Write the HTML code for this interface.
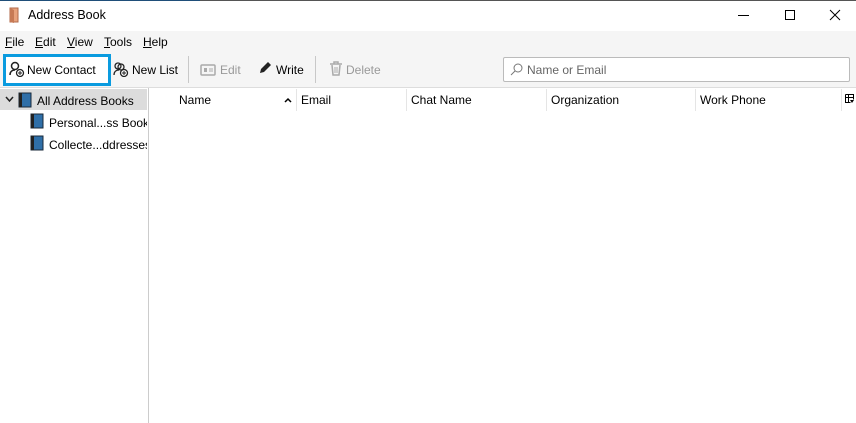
<!DOCTYPE html>
<html><head><style>
*{margin:0;padding:0;box-sizing:border-box}
body{width:856px;height:423px;overflow:hidden;background:#fff;font-family:"Liberation Sans",sans-serif;font-size:12px;color:#000;position:relative}
.a{position:absolute;white-space:nowrap}
u{text-decoration:underline}
.sep{position:absolute;width:1px;background:#c8c8c8}
.col{position:absolute;top:89px;height:22px;line-height:22px;border-right:1px solid #e5e5e5}
</style></head><body>
<div class="a" style="left:0;top:0;width:200px;height:1px;background:#1f4e79"></div>
<div class="a" style="left:200px;top:0;width:656px;height:1px;background:#555"></div>
<svg class="a" style="left:8px;top:7px" width="12" height="16"><path d="M2 1h8v14H2z" fill="#e8a27c" stroke="#b06a4a"/><path d="M2 1l4 2v13l-4-1z" fill="#c77a55"/></svg>
<div class="a" style="left:28px;top:8px;font-size:12.5px">Address Book</div>
<div class="a" style="left:738px;top:15px;width:11px;height:1px;background:#000"></div>
<div class="a" style="left:785px;top:10px;width:10px;height:10px;border:1px solid #000"></div>
<svg class="a" style="left:829px;top:9px" width="12" height="12"><path d="M1 1L11 11M11 1L1 11" stroke="#000"/></svg>
<div class="a" style="left:0;top:31px;width:856px;height:56px;background:#f5f5f5"></div>
<div class="a" style="left:5px;top:35px"><u>F</u>ile</div>
<div class="a" style="left:35px;top:35px"><u>E</u>dit</div>
<div class="a" style="left:67px;top:35px"><u>V</u>iew</div>
<div class="a" style="left:104px;top:35px"><u>T</u>ools</div>
<div class="a" style="left:143px;top:35px"><u>H</u>elp</div>
<div class="a" style="left:3px;top:54px;width:108px;height:32px;border:3px solid #0a9bdf;background:#fff"></div>
<svg class="a" style="left:9px;top:61px" width="16" height="16"><circle cx="6" cy="5" r="3.5" fill="none" stroke="#222" stroke-width="1.5"/><path d="M1 14c0-4 3-5 5-5" fill="none" stroke="#222" stroke-width="1.5"/><circle cx="11" cy="12" r="3.5" fill="#fff" stroke="#222" stroke-width="1.3"/><path d="M11 10v4M9 12h4" stroke="#222"/></svg>
<div class="a" style="left:27px;top:63px">New Contact</div>
<svg class="a" style="left:113px;top:61px" width="16" height="16"><circle cx="5" cy="5" r="3" fill="none" stroke="#222" stroke-width="1.3"/><circle cx="8" cy="6" r="3" fill="none" stroke="#222" stroke-width="1.3"/><path d="M1 14c0-4 3-5 5-5" fill="none" stroke="#222" stroke-width="1.3"/><circle cx="11" cy="12" r="3.5" fill="#fff" stroke="#222" stroke-width="1.3"/><path d="M11 10v4M9 12h4" stroke="#222"/></svg>
<div class="a" style="left:132px;top:63px">New List</div>
<div class="sep" style="left:188px;top:56px;height:27px"></div>
<svg class="a" style="left:200px;top:62px" width="16" height="14"><rect x="1" y="3" width="14" height="10" rx="1" fill="none" stroke="#aaa" stroke-width="1.5"/><rect x="4" y="6" width="3" height="4" fill="#aaa"/><path d="M9 7h4M9 9h4" stroke="#aaa"/></svg>
<div class="a" style="left:220px;top:63px;color:#999">Edit</div>
<svg class="a" style="left:258px;top:61px" width="14" height="14"><path d="M2 12l1-4 7-7 3 3-7 7z" fill="#222"/></svg>
<div class="a" style="left:276px;top:63px">Write</div>
<div class="sep" style="left:315px;top:56px;height:27px"></div>
<svg class="a" style="left:329px;top:61px" width="14" height="16"><path d="M1 3h12M5 3V1h4v2M3 4l1 10h6l1-10" fill="none" stroke="#aaa" stroke-width="1.5"/><path d="M6 6v6M8 6v6" stroke="#aaa"/></svg>
<div class="a" style="left:346px;top:63px;color:#999">Delete</div>
<div class="a" style="left:503px;top:57px;width:347px;height:25px;border:1px solid #bbb;border-radius:2px;background:#fff"></div>
<svg class="a" style="left:510px;top:63px" width="13" height="13"><circle cx="8" cy="5" r="4" fill="none" stroke="#777"/><path d="M5 8L1 12" stroke="#777"/></svg>
<div class="a" style="left:527px;top:63px;color:#666">Name or Email</div>
<div class="a" style="left:0;top:87px;width:856px;height:1px;background:#ddd"></div>
<div class="a" style="left:0;top:89px;width:147px;height:21px;background:#dcdcdc"></div>
<svg class="a" style="left:5px;top:96px" width="9" height="7"><path d="M1 1l3.5 4L8 1" fill="none" stroke="#222" stroke-width="1.5"/></svg>
<svg class="a" style="left:18px;top:92px" width="14" height="16"><rect x="1" y="1" width="12" height="14" fill="#2f6fa8" stroke="#1a2a3a"/><rect x="1" y="1" width="3" height="14" fill="#222"/></svg>
<div class="a" style="left:37px;top:94px">All Address Books</div>
<svg class="a" style="left:30px;top:113px" width="14" height="16"><rect x="1" y="1" width="12" height="14" fill="#2f6fa8" stroke="#1a2a3a"/><rect x="1" y="1" width="3" height="14" fill="#222"/></svg>
<div class="a" style="left:49px;top:116px;width:98px;overflow:hidden">Personal...ss Book</div>
<svg class="a" style="left:30px;top:135px" width="14" height="16"><rect x="1" y="1" width="12" height="14" fill="#2f6fa8" stroke="#1a2a3a"/><rect x="1" y="1" width="3" height="14" fill="#222"/></svg>
<div class="a" style="left:49px;top:138px;width:98px;overflow:hidden">Collecte...ddresses</div>
<div class="a" style="left:148px;top:88px;width:1px;height:335px;background:#ccc"></div>
<div class="col" style="left:149px;width:148px;padding-left:30px">Name</div>
<svg class="a" style="left:284px;top:97px" width="8" height="6"><path d="M1 5l3-3 3 3" fill="none" stroke="#000" stroke-width="1.5"/></svg>
<div class="col" style="left:297px;width:110px;padding-left:4px">Email</div>
<div class="col" style="left:407px;width:140px;padding-left:4px">Chat Name</div>
<div class="col" style="left:547px;width:149px;padding-left:4px">Organization</div>
<div class="col" style="left:696px;width:146px;padding-left:4px">Work Phone</div>
<svg class="a" style="left:845px;top:94px" width="10" height="10"><path d="M0.5 0.5h8v5M0.5 0.5v8h5M0.5 3.5h8M3.5 0.5v8" fill="none" stroke="#000"/><path d="M5 6h4l-2 3z" fill="#000"/></svg>
</body></html>
